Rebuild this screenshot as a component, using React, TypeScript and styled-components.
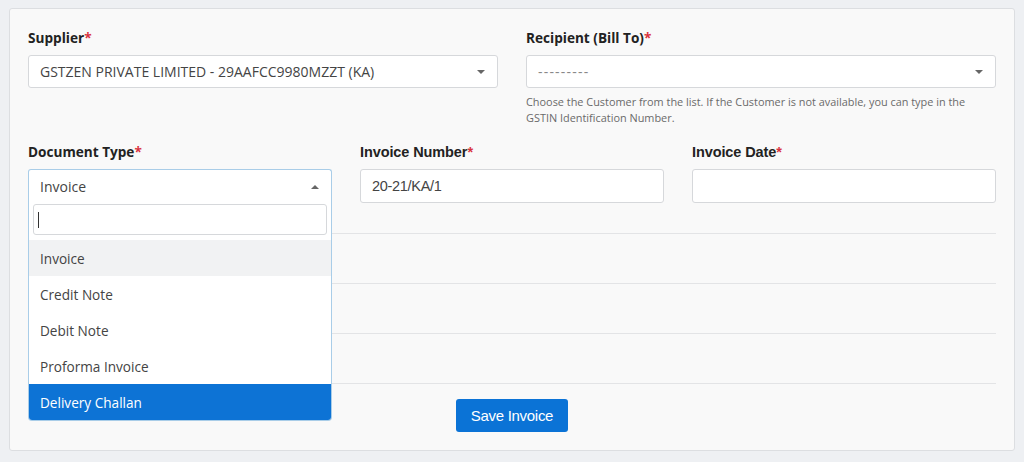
import React from "react";
import styled, { createGlobalStyle } from "styled-components";

const Global = createGlobalStyle`
  html, body { margin: 0; padding: 0; }
  body {
    background: #eef0f3;
    font-family: "Open Sans", "Noto Sans", sans-serif;
    color: #333;
  }
  * { box-sizing: border-box; }
`;

const Page = styled.div`
  padding: 8px 9px 11px 9px;
`;

const Card = styled.div`
  background: #f9f9f9;
  border: 1px solid #dcdee1;
  border-radius: 3px;
  padding: 19px 18px 18px 18px;
  display: flex;
  flex-direction: column;
`;

const Row = styled.div<{ $cols: number }>`
  display: grid;
  grid-template-columns: repeat(${(p) => p.$cols}, 1fr);
  column-gap: 28px;
  margin-bottom: ${(p) => (p.$cols === 2 ? 16 : 30)}px;
`;

const Field = styled.div`
  position: relative;
  display: flex;
  flex-direction: column;
`;

const Label = styled.label<{ $alt?: boolean }>`
  font-family: ${(p) =>
    p.$alt ? '"Liberation Sans", Arial, sans-serif' : '"Open Sans", sans-serif'};
  font-weight: 700;
  font-size: ${(p) => (p.$alt ? 14.5 : 13.6)}px;
  line-height: 20px;
  color: #222;
  margin-bottom: 7px;
  letter-spacing: ${(p) => (p.$alt ? "-0.1px" : "0")};
`;

const Req = styled.span`
  color: #d9343f;
`;

const Box = styled.div<{ $h?: number; $open?: boolean }>`
  height: ${(p) => p.$h ?? 33}px;
  background: #fff;
  border: 1px solid ${(p) => (p.$open ? "#a9cde8" : "#d6d8db")};
  border-radius: ${(p) => (p.$open ? "3px 3px 0 0" : "3px")};
  ${(p) => (p.$open ? "border-bottom: none;" : "")}
  display: flex;
  align-items: center;
  padding: 0 12px 0 11px;
  color: #444;
  position: relative;
`;

const BoxText = styled.span<{ $muted?: boolean; $alt?: boolean }>`
  flex: 1;
  white-space: nowrap;
  overflow: hidden;
  color: ${(p) => (p.$muted ? "#888" : "#444")};
  font-family: ${(p) =>
    p.$alt ? '"Liberation Sans", Arial, sans-serif' : '"Open Sans", sans-serif'};
  font-size: ${(p) => (p.$alt ? 14.5 : 14)}px;
  letter-spacing: ${(p) => (p.$alt ? "-0.3px" : p.$muted ? "1.2px" : "0")};
`;

const Caret = styled.span<{ $up?: boolean }>`
  width: 0;
  height: 0;
  border-left: 4px solid transparent;
  border-right: 4px solid transparent;
  ${(p) =>
    p.$up
      ? "border-bottom: 4px solid #666;"
      : "border-top: 4px solid #666;"}
`;

const Help = styled.div`
  margin-top: 6px;
  font-size: 10.9px;
  line-height: 16px;
  color: #6a6a6a;
`;

const Dropdown = styled.div`
  position: absolute;
  top: 61px;
  left: 0;
  right: 0;
  background: #fff;
  border: 1px solid #a9cde8;
  border-top: none;
  border-radius: 0 0 4px 4px;
  z-index: 5;
  overflow: hidden;
`;

const SearchWrap = styled.div`
  padding: 1px 4px 5px 4px;
`;

const Search = styled.div`
  height: 31px;
  border: 1px solid #d6d8db;
  border-radius: 3px;
  display: flex;
  align-items: center;
  padding-left: 4px;
`;

const Cursor = styled.span`
  width: 1px;
  height: 16px;
  background: #333;
`;

const Option = styled.div<{ $state?: "hover" | "selected" }>`
  height: 36px;
  display: flex;
  align-items: center;
  padding-left: 11px;
  font-size: 13.6px;
  color: ${(p) => (p.$state === "selected" ? "#fff" : "#444")};
  background: ${(p) =>
    p.$state === "hover"
      ? "#f1f2f3"
      : p.$state === "selected"
      ? "#0d73d5"
      : "#fff"};
`;

const Section = styled.div`
  height: 50px;
  border-top: 1px solid #e3e4e6;
`;

const LastLine = styled.div`
  border-top: 1px solid #e3e4e6;
  padding-top: 15px;
  display: flex;
  justify-content: center;
`;

const Button = styled.button`
  height: 33px;
  padding: 0 15px;
  background: #0b73d6;
  color: #fff;
  border: none;
  border-radius: 3px;
  font-family: "Liberation Sans", Arial, sans-serif;
  font-size: 15px;
  letter-spacing: -0.3px;
  cursor: pointer;
`;

const options = [
  "Invoice",
  "Credit Note",
  "Debit Note",
  "Proforma Invoice",
  "Delivery Challan",
];

export default function App() {
  return (
    <Page>
      <Global />
      <Card>
        <Row $cols={2}>
          <Field>
            <Label>
              Supplier<Req>*</Req>
            </Label>
            <Box>
              <BoxText>GSTZEN PRIVATE LIMITED - 29AAFCC9980MZZT (KA)</BoxText>
              <Caret />
            </Box>
          </Field>
          <Field>
            <Label>
              Recipient (Bill To)<Req>*</Req>
            </Label>
            <Box>
              <BoxText $muted>---------</BoxText>
              <Caret />
            </Box>
            <Help>
              Choose the Customer from the list. If the Customer is not available, you can type in the
              <br />
              GSTIN Identification Number.
            </Help>
          </Field>
        </Row>
        <Row $cols={3}>
          <Field>
            <Label>
              Document Type<Req>*</Req>
            </Label>
            <Box $h={34} $open>
              <BoxText>Invoice</BoxText>
              <Caret $up />
            </Box>
            <Dropdown>
              <SearchWrap>
                <Search>
                  <Cursor />
                </Search>
              </SearchWrap>
              {options.map((o, i) => (
                <Option
                  key={o}
                  $state={i === 0 ? "hover" : i === 4 ? "selected" : undefined}
                >
                  {o}
                </Option>
              ))}
            </Dropdown>
          </Field>
          <Field>
            <Label $alt>
              Invoice Number<Req>*</Req>
            </Label>
            <Box $h={34}>
              <BoxText $alt>20-21/KA/1</BoxText>
            </Box>
          </Field>
          <Field>
            <Label $alt>
              Invoice Date<Req>*</Req>
            </Label>
            <Box $h={34} />
          </Field>
        </Row>
        <Section />
        <Section />
        <Section />
        <LastLine>
          <Button>Save Invoice</Button>
        </LastLine>
      </Card>
    </Page>
  );
}
